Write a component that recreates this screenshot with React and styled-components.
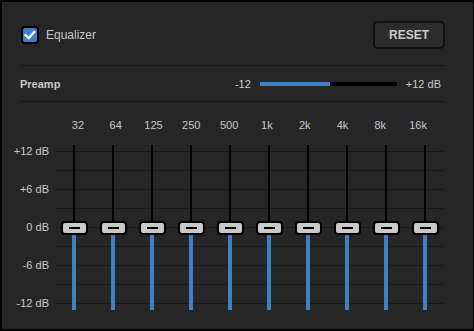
import React, { useState } from "react";
import styled, { createGlobalStyle } from "styled-components";

const GlobalStyle = createGlobalStyle`
  html, body {
    margin: 0;
    padding: 0;
    background: #000;
  }
  body {
    font-family: "Liberation Sans", Arial, sans-serif;
  }
`;

const BLUE = "#3d80c4";
const TEXT = "#c9c9c9";

const Panel = styled.div`
  width: 474px;
  height: 331px;
  box-sizing: border-box;
  background: #262626;
  border: 2px solid #000;
  border-right-width: 1px;
  padding: 19px 28px 0 18px;
  color: ${TEXT};
`;

const Header = styled.div`
  display: flex;
  align-items: center;
  justify-content: space-between;
  height: 28px;
`;

const Toggle = styled.label`
  display: flex;
  align-items: center;
  gap: 7px;
  font-size: 12px;
  cursor: pointer;
  padding-left: 1px;
`;

const Box = styled.span`
  width: 18px;
  height: 18px;
  box-sizing: border-box;
  border: 2px solid #000;
  border-radius: 4px;
  background: ${(p) => (p.$on ? BLUE : "#333")};
  display: flex;
  align-items: center;
  justify-content: center;
`;

const ResetButton = styled.button`
  width: 72px;
  height: 28px;
  box-sizing: border-box;
  background: #2c2c2c;
  border: 2px solid #111;
  border-radius: 5px;
  color: ${TEXT};
  font-family: "Liberation Sans", Arial, sans-serif;
  font-weight: bold;
  font-size: 12px;
  cursor: pointer;
`;

const PreampRow = styled.div`
  margin-top: 16px;
  height: 37px;
  box-sizing: border-box;
  border-top: 1px solid #191919;
  border-bottom: 1px solid #191919;
  display: flex;
  align-items: center;
  font-size: 11px;
`;

const PreampLabel = styled.span`
  font-weight: bold;
  flex: 1;
`;

const PreampControl = styled.div`
  display: flex;
  align-items: center;
  gap: 9px;
  padding-right: 4px;
`;

const Bar = styled.div`
  width: 137px;
  height: 4px;
  background: #000;
  display: flex;
`;

const BarFill = styled.div`
  height: 100%;
  background: ${BLUE};
`;

const Bands = styled.div`
  display: flex;
  padding-top: 17px;
  font-size: 11px;
`;

const Scale = styled.div`
  width: 34px;
  box-sizing: border-box;
  padding: 26px 5px 1px 0;
  height: 191px;
  display: flex;
  flex-direction: column;
  justify-content: space-between;
  align-items: flex-end;
`;

const ScaleLabel = styled.span`
  line-height: 12px;
  white-space: nowrap;
`;

const BandGrid = styled.div`
  width: 390px;
  display: flex;
  flex-direction: column;
  gap: 13px;
`;

const FreqRow = styled.div`
  display: grid;
  grid-template-columns: repeat(10, 1fr);
  width: 378px;
  margin-left: 5px;
`;

const Freq = styled.span`
  text-align: center;
  line-height: 13px;
`;

const Tracks = styled.div`
  display: grid;
  grid-template-columns: repeat(10, 39px);
  height: 165px;
  background-image: repeating-linear-gradient(
    to bottom,
    transparent 0 6px,
    #191919 6px 7px,
    transparent 7px 19px
  );
  background-size: 388px 159px;
  background-position: 2px 0;
  background-repeat: no-repeat;
`;

const Track = styled.div`
  display: flex;
  flex-direction: column;
  align-items: center;
  padding-left: 1px;
`;

const Rail = styled.div`
  flex: 1;
  width: 2px;
  background: #000;
`;

const Fill = styled.div`
  flex: 1;
  width: 4px;
  background: ${BLUE};
`;

const Knob = styled.div`
  width: 27px;
  height: 14px;
  box-sizing: border-box;
  background: #c8c8c8;
  border: 2px solid #000;
  border-radius: 4px;
  display: flex;
  align-items: center;
  justify-content: center;

  &::after {
    content: "";
    width: 11px;
    height: 2px;
    background: #000;
  }
`;

const freqs = ["32", "64", "125", "250", "500", "1k", "2k", "4k", "8k", "16k"];
const scale = ["+12 dB", "+6 dB", "0 dB", "-6 dB", "-12 dB"];

export default function App() {
  const [on, setOn] = useState(true);

  return (
    <>
      <GlobalStyle />
      <Panel>
        <Header>
          <Toggle onClick={() => setOn(!on)}>
            <Box $on={on}>
              {on && (
                <svg width="12" height="12" viewBox="0 0 12 12">
                  <path
                    d="M1.6 6.2 L4.6 9.2 L10.4 2.8"
                    fill="none"
                    stroke="#fff"
                    strokeWidth="2.4"
                    strokeLinecap="round"
                    strokeLinejoin="round"
                  />
                </svg>
              )}
            </Box>
            Equalizer
          </Toggle>
          <ResetButton>RESET</ResetButton>
        </Header>

        <PreampRow>
          <PreampLabel>Preamp</PreampLabel>
          <PreampControl>
            <span>-12</span>
            <Bar>
              <BarFill style={{ width: "51%" }} />
            </Bar>
            <span>+12 dB</span>
          </PreampControl>
        </PreampRow>

        <Bands>
          <Scale>
            {scale.map((s) => (
              <ScaleLabel key={s}>{s}</ScaleLabel>
            ))}
          </Scale>
          <BandGrid>
            <FreqRow>
              {freqs.map((f) => (
                <Freq key={f}>{f}</Freq>
              ))}
            </FreqRow>
            <Tracks>
              {freqs.map((f) => (
                <Track key={f}>
                  <Rail />
                  <Knob />
                  <Fill />
                </Track>
              ))}
            </Tracks>
          </BandGrid>
        </Bands>
      </Panel>
    </>
  );
}
